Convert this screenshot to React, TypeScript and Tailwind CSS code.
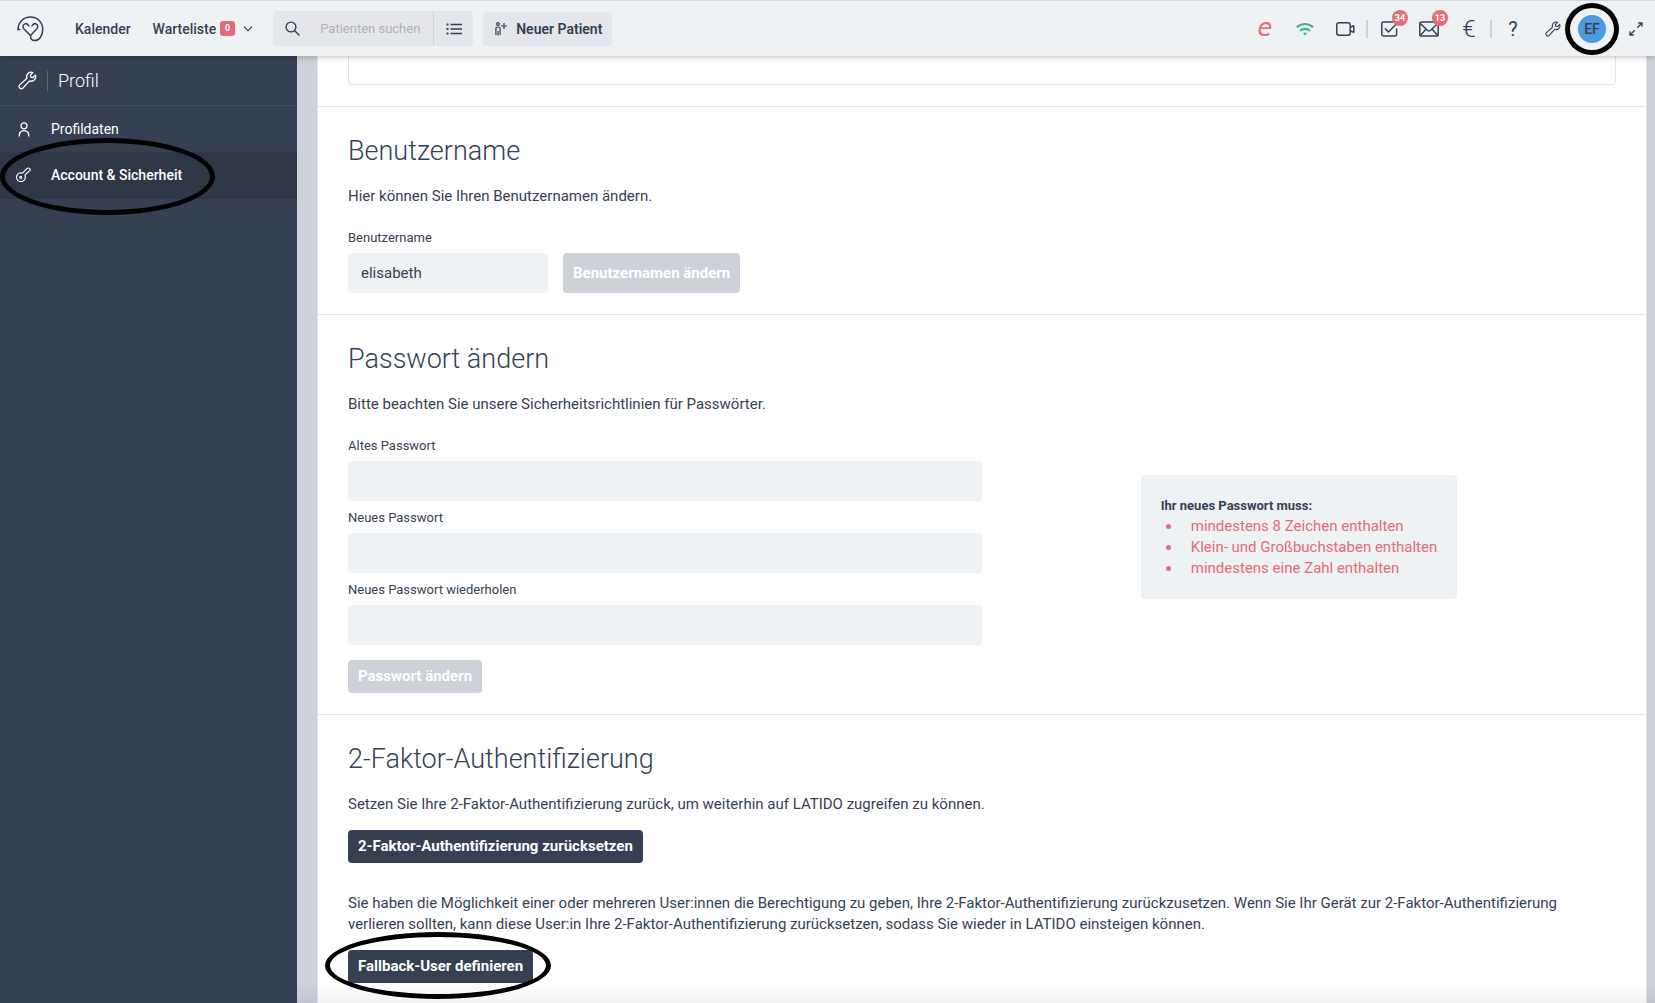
import React, { useState } from "react";

interface IconProps {
  className?: string;
}

function LogoIcon({ className }: IconProps) {
  return (
    <svg viewBox="0 0 27 26" fill="none" stroke="currentColor" strokeWidth="1.5" strokeLinecap="round" strokeLinejoin="round" className={className}>
      <path d="M1 13.5C1.200 6 6.500 1 13.300 1 20.500 1 25.700 6.200 25.700 13.200 25.700 19.500 22.500 24.600 17.800 24.600 14.800 24.600 13.300 22.500 13.500 19.500L7.200 13.200C5.400 11.300 5.700 8.800 7.700 7.900 9.600 7.100 10.900 8.200 11.800 9.800" />
      <path d="M13.500 19.500L19.700 13C21.300 11.200 20.900 8.800 19.100 7.900 17.200 7.100 15.800 8.200 14.900 9.800" />
      <path d="M1 13.500h1.800" />
    </svg>
  );
}

function WrenchIcon({ className }: IconProps) {
  return (
    <svg viewBox="0 0 20 20" fill="none" stroke="currentColor" strokeWidth="1.400" strokeLinecap="round" strokeLinejoin="round" className={className}>
      <path d="M15.700 1.700A4.700 4.700 0 0 0 9.400 7.700L1.900 14.600A2.200 2.200 0 0 0 5.200 17.900L12.200 10.400A4.700 4.700 0 0 0 18.300 4.300L15.800 6.900 13.500 6.400 13.100 4.300Z" />
    </svg>
  );
}

function PersonIcon({ className }: IconProps) {
  return (
    <svg viewBox="0 0 12 15" fill="none" stroke="currentColor" strokeWidth="1.300" strokeLinecap="round" className={className}>
      <circle cx="6" cy="3.800" r="3" />
      <path d="M1.200 14c0-3.500 1.700-5.300 4.800-5.300s4.800 1.800 4.800 5.300" />
    </svg>
  );
}

function KeyIcon({ className }: IconProps) {
  return (
    <svg viewBox="0 0 16 16" fill="none" stroke="currentColor" strokeWidth="1.200" strokeLinecap="round" strokeLinejoin="round" className={className}>
      <path d="M5 6.200L6.800 6.500 11.600 1.700C12.500.8 14 .8 14.700 1.600 15.400 2.500 15.200 3.600 14.400 4.300L13.200 4.800 12.800 6 11.500 6.500 9.600 8.600 9.900 10.300A4.700 4.700 0 1 1 5 6.200Z" />
      <circle cx="5" cy="11" r="1.100" />
    </svg>
  );
}

function SearchIcon({ className }: IconProps) {
  return (
    <svg viewBox="0 0 15 15" fill="none" stroke="currentColor" strokeWidth="1.400" strokeLinecap="round" className={className}>
      <circle cx="6" cy="6" r="4.900" />
      <path d="M9.700 9.700L14 14" />
    </svg>
  );
}

function ListIcon({ className }: IconProps) {
  return (
    <svg viewBox="0 0 16 12" fill="none" stroke="currentColor" strokeWidth="1.300" className={className}>
      <path d="M4.500 1.500H16M4.500 6H16M4.500 10.500H16" />
      <path d="M.5 1.500h2M.5 6h2M.5 10.500h2" strokeWidth="2" />
    </svg>
  );
}

function NewPatientIcon({ className }: IconProps) {
  return (
    <svg viewBox="0 0 12 14" fill="none" stroke="currentColor" strokeWidth="1.200" className={className}>
      <circle cx="3" cy="2" r="1.400" />
      <path d="M.9 13V6.500C.9 5.500 1.600 5 3 5s2.100.5 2.100 1.500V13M3 9v4.500M9 1v6M6 4h6" />
    </svg>
  );
}

function ChevronIcon({ className }: IconProps) {
  return (
    <svg viewBox="0 0 10 6" fill="none" stroke="currentColor" strokeWidth="1.100" strokeLinecap="round" className={className}>
      <path d="M1.300 1L5 4.700 8.700 1" />
    </svg>
  );
}

function WifiIcon({ className }: IconProps) {
  return (
    <svg viewBox="0 0 18 14" fill="none" stroke="currentColor" strokeWidth="2.100" className={className}>
      <path d="M.8 5.300C5.500.8 12.500.8 17.200 5.300M4 8.800C6.800 6.200 11.200 6.200 14 8.800" />
      <path d="M9 13.400L6.900 11.300C8 10.200 10 10.200 11.100 11.300Z" fill="currentColor" stroke="none" />
    </svg>
  );
}

function CameraIcon({ className }: IconProps) {
  return (
    <svg viewBox="0 0 19 14" fill="none" stroke="currentColor" strokeWidth="1.500" strokeLinejoin="round" className={className}>
      <rect x=".8" y=".8" width="13.400" height="12.400" rx="2.200" />
      <path d="M14.200 5.300L17.800 3.800V10.200L14.200 8.700" />
    </svg>
  );
}

function TaskIcon({ className }: IconProps) {
  return (
    <svg viewBox="0 0 17 16" fill="none" stroke="currentColor" strokeWidth="1.500" strokeLinecap="round" strokeLinejoin="round" className={className}>
      <path d="M12 1H2.200C1.300 1 .8 1.500.8 2.400V13.600C.8 14.500 1.300 15 2.200 15H14.200C15.100 15 15.600 14.500 15.600 13.600V8" />
      <path d="M4.200 7.700L7.400 11 14.800 3.500" />
    </svg>
  );
}

function MailIcon({ className }: IconProps) {
  return (
    <svg viewBox="0 0 20 16" fill="none" stroke="currentColor" strokeWidth="1.500" strokeLinejoin="round" className={className}>
      <rect x=".8" y="1" width="18.400" height="14" rx="1.800" />
      <path d="M1.300 2.500L8.700 9.500C9.500 10.200 10.500 10.200 11.300 9.500L18.700 2.500M1.500 14.300L7 8.200M18.500 14.300L13 8.200" />
    </svg>
  );
}

function ExpandIcon({ className }: IconProps) {
  return (
    <svg viewBox="0 0 14 14" fill="none" stroke="currentColor" strokeWidth="1.300" className={className}>
      <path d="M9.200 1H13V4.800M13 1L8.300 5.700M4.800 13H1V9.200M1 13L5.700 8.300" />
    </svg>
  );
}

// Hand-drawn style ring that highlights an element
function Marker({ className }: IconProps) {
  return <span aria-hidden="true" className={`absolute z-30 rounded-[50%] border-black pointer-events-none ${className}`} />;
}

function CountBadge({ count }: { count: number }) {
  return (
    <span className="absolute left-[23px] -top-[11px] w-4 h-4 rounded-full bg-[#e56b7a] text-white text-[9px] leading-4 font-bold text-center">
      {count}
    </span>
  );
}

function Divider() {
  return <span className="w-1 h-[18px] flex justify-center"><span className="w-0.5 h-full bg-[#cdd1d9]" /></span>;
}

function Header() {
  const [search, setSearch] = useState("");

  return (
    <header className="relative z-20 h-14 shrink-0 flex items-center bg-[#eef2f5] border-t border-[#d5d5d5] shadow-[0_1px_6px_rgba(0,0,0,0.25)]">
      <a href="#start" aria-label="Startseite" className="pl-[17px]">
        <LogoIcon className="w-[27px] h-[26px]" />
      </a>
      <a href="#kalender" className="ml-[31px] text-sm font-medium">Kalender</a>
      <button type="button" className="ml-[22px] flex items-center text-sm font-medium cursor-pointer">
        <span>Warteliste</span>
        <span className="ml-1 w-[15px] h-[15px] rounded-[3px] bg-[#e56b7a] text-white text-[9px] leading-[15px] font-bold">0</span>
        <ChevronIcon className="ml-2 w-[10px] h-[6px]" />
      </button>

      <div className="ml-5 flex h-[35px] rounded bg-[#e4e6eb]">
        <button type="button" aria-label="Suchen" className="w-[38px] flex items-center justify-center cursor-pointer">
          <SearchIcon className="w-[15px] h-[15px]" />
        </button>
        <input
          aria-label="Patienten suchen"
          value={search}
          onChange={(e) => setSearch(e.target.value)}
          placeholder="Patienten suchen"
          className="w-[122px] pl-[9px] text-[13px] outline-none placeholder:text-[#b0b2b6]"
        />
        <button type="button" aria-label="Patientenliste" className="w-10 flex items-center justify-center border-l border-[#d0d4db] cursor-pointer">
          <ListIcon className="w-4 h-3" />
        </button>
      </div>
      <button type="button" className="ml-[10px] h-[34px] pl-3 pr-[10px] flex items-center gap-[9px] rounded bg-[#e4e6eb] text-sm font-semibold cursor-pointer">
        <NewPatientIcon className="w-3 h-[14px]" />
        Neuer Patient
      </button>

      <nav className="ml-auto flex items-center">
        <button type="button" aria-label="e-card" className="w-10 h-8 flex items-center justify-center text-[#e56b7a] cursor-pointer">
          <span className="font-['DejaVu_Sans',sans-serif] italic text-[24px] leading-6 pb-0.5">e</span>
        </button>
        <button type="button" aria-label="Verbindung" className="w-10 flex justify-center text-[#3eb489] cursor-pointer">
          <WifiIcon className="w-[18px] h-[14px]" />
        </button>
        <button type="button" aria-label="Videotelefonie" className="w-10 flex justify-center cursor-pointer">
          <CameraIcon className="w-[19px] h-[14px]" />
        </button>
        <Divider />
        <button type="button" aria-label="Aufgaben" className="relative w-10 flex justify-center cursor-pointer">
          <TaskIcon className="w-[17px] h-4" />
          <CountBadge count={34} />
        </button>
        <button type="button" aria-label="Nachrichten" className="relative w-10 flex justify-center cursor-pointer">
          <MailIcon className="w-5 h-4" />
          <CountBadge count={13} />
        </button>
        <button type="button" aria-label="Abrechnung" className="w-10 text-[24px] leading-6 font-light cursor-pointer">€</button>
        <Divider />
        <button type="button" aria-label="Hilfe" className="w-10 text-[20px] leading-6 cursor-pointer">?</button>
        <button type="button" aria-label="Einstellungen" className="w-10 flex justify-center cursor-pointer">
          <WrenchIcon className="w-4 h-4" />
        </button>
        <button type="button" aria-label="Profil" className="relative w-[38px] mr-[6px] flex justify-center cursor-pointer">
          <span className="w-7 h-7 rounded-full bg-[#4f9ade] text-sm leading-7 font-medium">EF</span>
          <Marker className="-left-2 -top-3 w-[54px] h-[52px] border-[5px]" />
        </button>
        <button type="button" aria-label="Vollbild" className="w-[38px] flex justify-center cursor-pointer">
          <ExpandIcon className="w-[14px] h-[14px]" />
        </button>
      </nav>
    </header>
  );
}

function Sidebar() {
  return (
    <aside className="w-[297px] shrink-0 bg-[#373f52] text-white">
      <div className="h-[50px] flex items-center pl-[18px] border-b border-[#434b5e]">
        <WrenchIcon className="w-[19px] h-[19px]" />
        <span className="ml-[10px] w-px h-5 bg-[#596682]" />
        <h1 className="ml-[10px] text-lg font-light">Profil</h1>
      </div>
      <nav className="text-sm">
        <a href="#profildaten" className="h-[46px] flex items-center">
          <span className="w-[51px] flex justify-center pr-1">
            <PersonIcon className="w-3 h-[15px]" />
          </span>
          Profildaten
        </a>
        <a href="#account" className="relative h-[47px] pb-0.5 flex items-center bg-[#2f3646] font-medium">
          <span className="w-[51px] flex justify-center pr-1">
            <KeyIcon className="w-[15px] h-[15px]" />
          </span>
          Account &amp; Sicherheit
          <Marker className="left-0 -top-[14px] w-[215px] h-[77px] border-[5px]" />
        </a>
      </nav>
    </aside>
  );
}

interface SectionProps {
  title: string;
  children: React.ReactNode;
}

function Section({ title, children }: SectionProps) {
  return (
    <section className="pt-[30px] px-[30px] pb-[21px] border-b border-[#e3e5eb] last:border-b-0">
      <h2 className="text-[27px] leading-7 font-light">{title}</h2>
      <div className="mt-[21px]">{children}</div>
    </section>
  );
}

interface FieldProps {
  id: string;
  label: string;
  type?: string;
  value: string;
  onChange: (value: string) => void;
}

function Field({ id, label, type = "text", value, onChange }: FieldProps) {
  return (
    <div className="pt-[9px]">
      <label htmlFor={id} className="block text-[13px] leading-4">{label}</label>
      <input
        id={id}
        type={type}
        value={value}
        onChange={(e) => onChange(e.target.value)}
        className="mt-[7px] block w-full h-10 px-[13px] rounded bg-[#eef2f5] text-[15px] outline-none"
      />
    </div>
  );
}

const passwordRules = [
  "mindestens 8 Zeichen enthalten",
  "Klein- und Großbuchstaben enthalten",
  "mindestens eine Zahl enthalten",
];

export default function App() {
  const [username, setUsername] = useState("elisabeth");
  const [oldPassword, setOldPassword] = useState("");
  const [newPassword, setNewPassword] = useState("");
  const [repeatPassword, setRepeatPassword] = useState("");

  return (
    <div className="h-screen flex flex-col overflow-hidden bg-[#cdd1d8] font-[Roboto,sans-serif] text-[#373f52]">
      <Header />

      <div className="flex flex-1 min-h-0">
        <Sidebar />

        <main className="relative flex flex-col flex-1 min-w-0 pl-5 pr-2 text-[15px] leading-[21px]">
          <div className="flex-1 bg-white border-x border-[#e3e5eb]">
            {/* Lower edge of the previous card */}
            <div className="px-[30px] pb-[21px] border-b border-[#e3e5eb]">
              <div className="h-[29px] border border-t-0 border-[#e3e5eb] rounded-b" />
            </div>

            <Section title="Benutzername">
              <p>Hier können Sie Ihren Benutzernamen ändern.</p>
              <div className="mt-[14px] flex items-end gap-[15px]">
                <div className="w-[200px]">
                  <Field id="username" label="Benutzername" value={username} onChange={setUsername} />
                </div>
                <button type="button" disabled className="h-10 px-[10px] rounded bg-[#cdd1d8] text-white font-bold">
                  Benutzernamen ändern
                </button>
              </div>
            </Section>

            <Section title="Passwort ändern">
              <p>Bitte beachten Sie unsere Sicherheitsrichtlinien für Passwörter.</p>
              <form onSubmit={(e) => e.preventDefault()}>
                <div className="mt-[14px] grid grid-cols-2 items-center">
                  <div>
                    <Field id="old-password" type="password" label="Altes Passwort" value={oldPassword} onChange={setOldPassword} />
                    <Field id="new-password" type="password" label="Neues Passwort" value={newPassword} onChange={setNewPassword} />
                    <Field id="repeat-password" type="password" label="Neues Passwort wiederholen" value={repeatPassword} onChange={setRepeatPassword} />
                  </div>
                  <div className="justify-self-center p-5 rounded bg-[#eef2f5]">
                    <p className="text-[13px] font-bold">Ihr neues Passwort muss:</p>
                    <ul className="text-[#e56b7a]">
                      {passwordRules.map((rule) => (
                        <li key={rule} className="flex items-center gap-5 pl-[5px]">
                          <span className="w-[5px] h-[5px] shrink-0 rounded-full bg-[#e56b7a]" />
                          {rule}
                        </li>
                      ))}
                    </ul>
                  </div>
                </div>
                <button type="submit" disabled className="mt-[15px] h-[33px] px-[10px] rounded bg-[#cdd1d8] text-white font-bold">
                  Passwort ändern
                </button>
              </form>
            </Section>

            <Section title="2-Faktor-Authentifizierung">
              <p>Setzen Sie Ihre 2-Faktor-Authentifizierung zurück, um weiterhin auf LATIDO zugreifen zu können.</p>
              <button type="button" className="mt-[15px] h-[33px] px-[10px] rounded bg-[#373f52] text-white font-bold cursor-pointer">
                2-Faktor-Authentifizierung zurücksetzen
              </button>
              <p className="mt-[30px]">
                Sie haben die Möglichkeit einer oder mehreren User:innen die Berechtigung zu geben, Ihre 2-Faktor-Authentifizierung
                zurückzusetzen. Wenn Sie Ihr Gerät zur 2-Faktor-Authentifizierung verlieren sollten, kann diese User:in Ihre
                2-Faktor-Authentifizierung zurücksetzen, sodass Sie wieder in LATIDO einsteigen können.
              </p>
              <button type="button" className="relative mt-[15px] h-[33px] px-[10px] rounded bg-[#373f52] text-white font-bold cursor-pointer">
                Fallback-User definieren
                <Marker className="-left-[23px] -top-[18px] w-[226px] h-[67px] border-[5px]" />
              </button>
            </Section>
          </div>
          <div className="absolute inset-x-0 bottom-0 h-5 bg-linear-to-b from-transparent to-black/5 pointer-events-none" />
        </main>
      </div>
    </div>
  );
}
